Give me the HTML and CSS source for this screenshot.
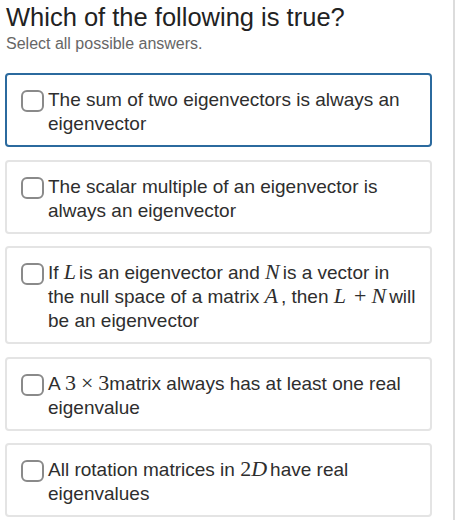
FILE: index.html
```html
<!DOCTYPE html>
<html>
<head>
<meta charset="utf-8">
<link rel="stylesheet" href="styles.css">
</head>
<body>
<div class="page">
  <h1 class="title">Which of the following is true?</h1>
  <p class="subtitle">Select all possible answers.</p>
  <div class="options">
    <div class="card selected">
      <span class="box"></span>
      <span class="text">The sum of two eigenvectors is always an eigenvector</span>
    </div>
    <div class="card">
      <span class="box"></span>
      <span class="text">The scalar multiple of an eigenvector is always an eigenvector</span>
    </div>
    <div class="card">
      <span class="box"></span>
      <span class="text">If <span class="mi">L</span>is an eigenvector and <span class="mi">N</span>is a vector in the null space of a matrix <span class="mi">A</span>, then <span class="mi">L</span><span class="mo">+</span><span class="mi">N</span>will be an eigenvector</span>
    </div>
    <div class="card">
      <span class="box"></span>
      <span class="text">A <span class="mn">3</span><span class="mo">×</span><span class="mn">3</span>matrix always has at least one real eigenvalue</span>
    </div>
    <div class="card">
      <span class="box"></span>
      <span class="text">All rotation matrices in <span class="mn">2</span><span class="mi">D</span>have real eigenvalues</span>
    </div>
  </div>
</div>
</body>
</html>
```

FILE: styles.css
```css
html, body {
  margin: 0;
  padding: 0;
  background: #ffffff;
}
.page {
  width: 455px;
  height: 520px;
  border-right: 2px solid #dcdcdc;
  box-sizing: border-box;
  font-family: "Liberation Sans", Arial, sans-serif;
  color: #2b2b2b;
  overflow: hidden;
}
.title {
  margin: 0;
  padding: 1px 0 0 6px;
  font-size: 25.5px;
  font-weight: normal;
  line-height: 32px;
  color: #222222;
}
.subtitle {
  margin: 0;
  padding: 1px 0 0 6px;
  font-size: 16px;
  line-height: 20px;
  color: #666666;
}
.options {
  display: flex;
  flex-direction: column;
  gap: 12.5px;
  margin: 19px 0 0 5px;
  width: 427px;
}
.card {
  display: flex;
  align-items: flex-start;
  gap: 4px;
  border: 2px solid #e4e4e4;
  border-radius: 4px;
  padding: 13px 10px 9px 14px;
}
.card.selected {
  border-color: #2b6a9e;
}
.box {
  flex: none;
  width: 23px;
  height: 22px;
  margin-top: 2px;
  box-sizing: border-box;
  border: 2px solid #8a8a8a;
  border-radius: 6px;
}
.text {
  font-size: 19px;
  line-height: 24px;
  color: #2e2e2e;
}
.mi {
  font-family: "Liberation Serif", "Times New Roman", serif;
  font-style: italic;
  font-size: 22px;
  line-height: 1;
  margin-right: 3px;
}
.mn {
  font-family: "Liberation Serif", "Times New Roman", serif;
  font-size: 22px;
  line-height: 1;
}
.mo {
  font-family: "Liberation Serif", "Times New Roman", serif;
  font-size: 22px;
  line-height: 1;
  margin: 0 5px;
}
```
